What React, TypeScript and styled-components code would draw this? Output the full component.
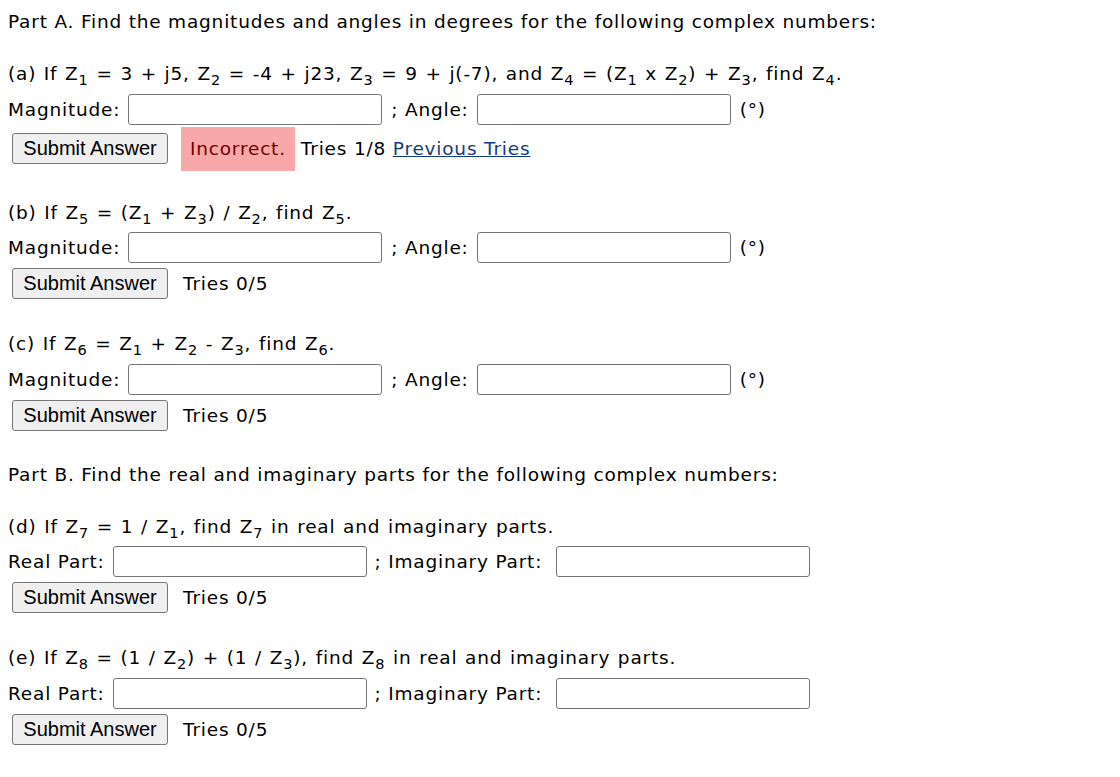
import React from "react";
import styled, { createGlobalStyle } from "styled-components";

const Global = createGlobalStyle`
  html, body { padding: 0; background: #ffffff; }
  body {
    margin: 8px;
    font-family: "DejaVu Sans", Verdana, sans-serif;
    font-size: 18.5px;
    letter-spacing: 0.8px;
    color: #000000;
  }
`;

const Page = styled.main`
  display: flex;
  flex-direction: column;
`;

const Part = styled.section`
  display: flex;
  flex-direction: column;
`;

const Title = styled.div`
  height: 26px;
  line-height: 28px;
  margin-bottom: 25px;
  white-space: nowrap;
`;

const Question = styled.div`
  display: flex;
  flex-direction: column;
  margin-bottom: 30px;
`;

const Prompt = styled.div`
  height: 30px;
  line-height: 30px;
  white-space: nowrap;
  word-spacing: 1px;
`;

const Sub = styled.sub`
  font-size: 14.5px;
  line-height: 0;
  vertical-align: -5px;
  letter-spacing: 0.6px;
  margin-right: 0.3px;
`;

const FieldRow = styled.div`
  display: flex;
  align-items: center;
  height: 31px;
  margin-top: 4.5px;
`;

const Label = styled.span<{ $gap: number }>`
  white-space: nowrap;
  margin-right: ${(p) => p.$gap}px;
`;

const Field = styled.input`
  box-sizing: border-box;
  width: 254px;
  height: 31px;
  margin: 0;
  border: 1px solid #767676;
  border-radius: 3px;
  background: #ffffff;
  padding: 2px 4px;
  font: inherit;
`;

const Separator = styled.span<{ $left: number; $right: number }>`
  white-space: nowrap;
  margin: 0 ${(p) => p.$right}px 0 ${(p) => p.$left}px;
`;

const Unit = styled.span`
  margin-left: 9px;
  white-space: nowrap;
`;

const ActionRow = styled.div`
  display: flex;
  align-items: center;
  min-height: 31px;
  margin-top: 5px;
`;

const SubmitButton = styled.button`
  box-sizing: border-box;
  width: 156px;
  height: 31px;
  margin: 0 0 0 4px;
  padding: 0;
  border: 1px solid #767676;
  border-radius: 3px;
  background: #efefef;
  color: #000000;
  font-family: "Liberation Sans", Arial, sans-serif;
  font-size: 20px;
  letter-spacing: 0;
  cursor: pointer;
`;

const Feedback = styled.span`
  display: flex;
  align-items: center;
  height: 44px;
  margin: -3px 0 -3px 13px;
  padding: 0 9px;
  background: #f8a8a8;
  color: #750000;
  white-space: nowrap;
`;

const Tries = styled.span<{ $after: number }>`
  margin-left: ${(p) => p.$after}px;
  white-space: nowrap;
`;

const Link = styled.a`
  color: #123d80;
  text-decoration: underline;
`;

type FieldKind = "polar" | "rect";

const Fields: React.FC<{ kind: FieldKind }> = ({ kind }) =>
  kind === "polar" ? (
    <FieldRow>
      <Label $gap={8}>Magnitude:</Label>
      <Field type="text" />
      <Separator $left={9} $right={8}>
        ; Angle:
      </Separator>
      <Field type="text" />
      <Unit>(°)</Unit>
    </FieldRow>
  ) : (
    <FieldRow>
      <Label $gap={8}>Real Part:</Label>
      <Field type="text" />
      <Separator $left={8} $right={14}>
        ; Imaginary Part:
      </Separator>
      <Field type="text" />
    </FieldRow>
  );

const Z: React.FC<{ n: number }> = ({ n }) => (
  <>
    Z<Sub>{n}</Sub>
  </>
);

const Block: React.FC<{
  prompt: React.ReactNode;
  kind: FieldKind;
  tries: string;
  incorrect?: boolean;
}> = ({ prompt, kind, tries, incorrect }) => (
  <Question>
    <Prompt>{prompt}</Prompt>
    <Fields kind={kind} />
    <ActionRow>
      <SubmitButton type="button">Submit Answer</SubmitButton>
      {incorrect ? (
        <>
          <Feedback>Incorrect.</Feedback>
          <Tries $after={6}>
            Tries {tries} <Link href="#">Previous Tries</Link>
          </Tries>
        </>
      ) : (
        <Tries $after={15}>Tries {tries}</Tries>
      )}
    </ActionRow>
  </Question>
);

export default function App() {
  return (
    <Page>
      <Global />
      <Part>
        <Title>
          Part A. Find the magnitudes and angles in degrees for the following complex numbers:
        </Title>
        <Block
          kind="polar"
          tries="1/8"
          incorrect
          prompt={
            <>
              (a) If <Z n={1} /> = 3 + j5, <Z n={2} /> = -4 + j23, <Z n={3} /> = 9 + j(-7), and{" "}
              <Z n={4} /> = (<Z n={1} /> x <Z n={2} />) + <Z n={3} />, find <Z n={4} />.
            </>
          }
        />
        <Block
          kind="polar"
          tries="0/5"
          prompt={
            <>
              (b) If <Z n={5} /> = (<Z n={1} /> + <Z n={3} />) / <Z n={2} />, find <Z n={5} />.
            </>
          }
        />
        <Block
          kind="polar"
          tries="0/5"
          prompt={
            <>
              (c) If <Z n={6} /> = <Z n={1} /> + <Z n={2} /> - <Z n={3} />, find <Z n={6} />.
            </>
          }
        />
      </Part>
      <Part>
        <Title>Part B. Find the real and imaginary parts for the following complex numbers:</Title>
        <Block
          kind="rect"
          tries="0/5"
          prompt={
            <>
              (d) If <Z n={7} /> = 1 / <Z n={1} />, find <Z n={7} /> in real and imaginary parts.
            </>
          }
        />
        <Block
          kind="rect"
          tries="0/5"
          prompt={
            <>
              (e) If <Z n={8} /> = (1 / <Z n={2} />) + (1 / <Z n={3} />), find <Z n={8} /> in real and
              imaginary parts.
            </>
          }
        />
      </Part>
    </Page>
  );
}
